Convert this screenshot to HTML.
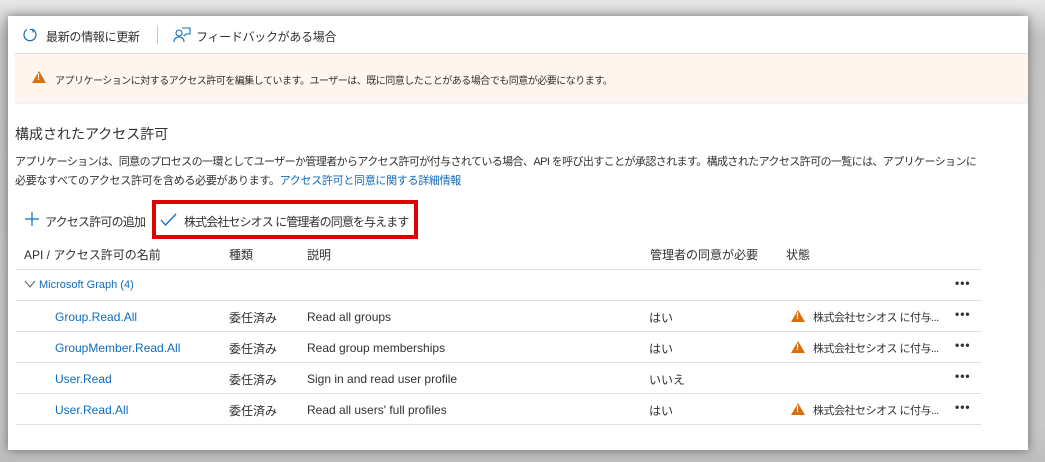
<!DOCTYPE html><html><head><meta charset="utf-8"><style>
body{margin:0;width:1045px;height:462px;background:#d0d0d0;font-family:"Liberation Sans","Noto Sans CJK JP",sans-serif;color:#323130;position:relative;overflow:hidden}
.bgr{position:absolute;inset:0;background:linear-gradient(#e8e8e8,#c4c4c4 8%,#c8c8c8 92%,#bdbdbd)}
.p{position:absolute;left:8px;top:16px;width:1020px;height:434px;background:#fff;box-shadow:0 0 10px rgba(0,0,0,.45);overflow:hidden}
.a{position:absolute;white-space:nowrap}
.s12{font-size:12px}.lk{color:#0f6cbd}
.hl{position:absolute;left:8px;width:965px;height:1px;background:#e1dfdd}
.tri{position:absolute;width:0;height:0;border-left:7px solid transparent;border-right:7px solid transparent;border-bottom:12px solid #d86f0b}
.tri:after{content:"!";position:absolute;left:-2px;top:1px;font-size:9px;color:#fff;font-weight:bold}
.dots{position:absolute;left:947px;font-size:12px;letter-spacing:1px;color:#323130;font-weight:bold}
.st{font-size:11px;letter-spacing:-0.5px;left:805px}
</style></head><body><div class="bgr"></div>
<div class="p">
<svg class="a" style="left:14px;top:11px" width="16" height="16" viewBox="0 0 16 16"><path d="M5 2.5A6 6 0 1 0 11 2.5M11 2.5V5.5M11 2.5H8" fill="none" stroke="#0f6cbd" stroke-width="1.2"/></svg>
<div class="a s12" style="left:38px;top:12px;letter-spacing:-0.3px">最新の情報に更新</div>
<div class="a" style="left:149px;top:10px;width:1px;height:18px;background:#c8c6c4"></div>
<svg class="a" style="left:165px;top:11px" width="18" height="16" viewBox="0 0 18 16"><circle cx="6" cy="6" r="3" fill="none" stroke="#0f6cbd" stroke-width="1.1"/><path d="M1 15c0-4 3-5 5-5s5 1 5 5M9 1h8v6h-4l-2 2" fill="none" stroke="#0f6cbd" stroke-width="1.1"/></svg>
<div class="a s12" style="left:188px;top:12px;letter-spacing:-0.3px">フィードバックがある場合</div>
<div class="a" style="left:7px;top:37px;width:1013px;height:1px;background:#e1dfdd"></div>
<div class="a" style="left:7px;top:38px;width:1013px;height:48px;background:#fdf5ee;border-bottom:2px solid #eff4fb"></div>
<div class="tri" style="left:24px;top:55px"></div>
<div class="a" style="left:47px;top:56px;font-size:10px;letter-spacing:-0.5px">アプリケーションに対するアクセス許可を編集しています。ユーザーは、既に同意したことがある場合でも同意が必要になります。</div>
<div class="a" style="left:7px;top:108px;font-size:14px">構成されたアクセス許可</div>
<div class="a" style="left:7px;top:137px;font-size:11px;letter-spacing:-0.6px">アプリケーションは、同意のプロセスの一環としてユーザーか管理者からアクセス許可が付与されている場合、API を呼び出すことが承認されます。構成されたアクセス許可の一覧には、アプリケーションに</div>
<div class="a" style="left:7px;top:156px;font-size:11px;letter-spacing:-0.3px">必要なすべてのアクセス許可を含める必要があります。<span class="lk">アクセス許可と同意に関する詳細情報</span></div>
<svg class="a" style="left:17px;top:196px" width="14" height="14" viewBox="0 0 14 14"><path d="M7 0v14M0 7h14" stroke="#0f6cbd" stroke-width="1.2"/></svg>
<div class="a s12" style="left:37px;top:197px;letter-spacing:-0.8px">アクセス許可の追加</div>
<div class="a" style="left:144px;top:184px;width:258px;height:31px;border:4px solid #e00000"></div>
<svg class="a" style="left:152px;top:197px" width="17" height="13" viewBox="0 0 17 13"><path d="M1 7l4.5 5L16 1" fill="none" stroke="#0f6cbd" stroke-width="1.3"/></svg>
<div class="a s12" style="left:176px;top:197px;letter-spacing:-0.9px">株式会社セシオス に管理者の同意を与えます</div>
<div class="a s12" style="left:16px;top:230px">API / アクセス許可の名前</div>
<div class="a s12" style="left:221px;top:230px">種類</div>
<div class="a s12" style="left:299px;top:230px">説明</div>
<div class="a s12" style="left:642px;top:230px">管理者の同意が必要</div>
<div class="a s12" style="left:778px;top:230px">状態</div>
<div class="hl" style="top:253px"></div>
<svg class="a" style="left:16px;top:264px" width="12" height="8" viewBox="0 0 12 8"><path d="M1 1l5 6 5-6" fill="none" stroke="#605e5c"/></svg>
<div class="a s12 lk" style="left:31px;top:263px;font-size:11px">Microsoft Graph (4)</div>
<div class="dots" style="top:260px">•••</div>
<div class="hl" style="top:284px"></div>
<div class="a s12 lk" style="left:47px;top:294px">Group.Read.All</div><div class="a s12" style="left:221px;top:293px">委任済み</div><div class="a s12" style="left:299px;top:294px">Read all groups</div><div class="a s12" style="left:641px;top:293px">はい</div><div class="tri" style="left:783px;top:294px"></div><div class="a st" style="top:293px">株式会社セシオス に付与...</div><div class="dots" style="top:291px">•••</div>
<div class="hl" style="top:315px"></div>
<div class="a s12 lk" style="left:47px;top:325px">GroupMember.Read.All</div><div class="a s12" style="left:221px;top:324px">委任済み</div><div class="a s12" style="left:299px;top:325px">Read group memberships</div><div class="a s12" style="left:641px;top:324px">はい</div><div class="tri" style="left:783px;top:325px"></div><div class="a st" style="top:324px">株式会社セシオス に付与...</div><div class="dots" style="top:322px">•••</div>
<div class="hl" style="top:346px"></div>
<div class="a s12 lk" style="left:47px;top:356px">User.Read</div><div class="a s12" style="left:221px;top:355px">委任済み</div><div class="a s12" style="left:299px;top:356px">Sign in and read user profile</div><div class="a s12" style="left:641px;top:355px">いいえ</div><div class="dots" style="top:353px">•••</div>
<div class="hl" style="top:377px"></div>
<div class="a s12 lk" style="left:47px;top:387px">User.Read.All</div><div class="a s12" style="left:221px;top:386px">委任済み</div><div class="a s12" style="left:299px;top:387px">Read all users' full profiles</div><div class="a s12" style="left:641px;top:386px">はい</div><div class="tri" style="left:783px;top:387px"></div><div class="a st" style="top:386px">株式会社セシオス に付与...</div><div class="dots" style="top:384px">•••</div>
<div class="hl" style="top:408px"></div>
</div></body></html>
